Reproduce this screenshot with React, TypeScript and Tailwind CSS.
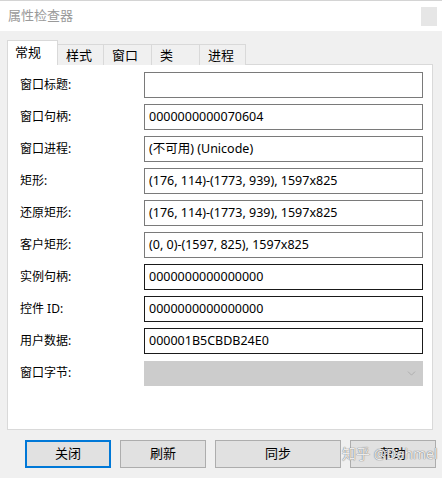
import { ChevronDown } from "lucide-react";

const rows: { label: string; value: string; dark?: boolean }[] = [
  { label: "窗口标题:", value: "" },
  { label: "窗口句柄:", value: "0000000000070604" },
  { label: "窗口进程:", value: "(不可用) (Unicode)" },
  { label: "矩形:", value: "(176, 114)-(1773, 939), 1597x825" },
  { label: "还原矩形:", value: "(176, 114)-(1773, 939), 1597x825" },
  { label: "客户矩形:", value: "(0, 0)-(1597, 825), 1597x825" },
  { label: "实例句柄:", value: "0000000000000000", dark: true },
  { label: "控件 ID:", value: "0000000000000000", dark: true },
  { label: "用户数据:", value: "000001B5CBDB24E0", dark: true },
];

const tabs = ["样式", "窗口", "类", "进程"];
const tabWidths = ["w-[46px]", "w-[48px]", "w-[48px]", "w-[46px]"];

export default function App() {
  return (
    <div className="relative w-[442px] h-[478px] overflow-hidden bg-[#f0f0f0] text-[12px] text-black font-['Noto_Sans','Noto_Sans_CJK_SC',sans-serif]">
      {/* title bar */}
      <div className="flex items-center justify-between h-[31px] bg-white border-t border-[#d4d4d4] pl-[8px] pr-[5px]">
        <span className="text-[13px] text-[#9a9a9a]">属性检查器</span>
        <div className="w-[16px] h-[19px] bg-[#e6e6e6]" />
      </div>

      <div className="pl-[7px] pt-[9px]">
        {/* tabs */}
        <div className="flex items-end h-[25px] -mb-px">
          <div className="relative z-10 w-[51px] h-[25px] bg-white border border-b-0 border-[#d9d9d9] pl-[7px] pt-[2px] text-[13px]">
            常规
          </div>
          {tabs.map((t, i) => (
            <div
              key={t}
              className={`${tabWidths[i]} h-[21px] border-t border-r border-[#d9d9d9] pl-[8px] text-[13px] leading-[20px] bg-[#f0f0f0]`}
            >
              {t}
            </div>
          ))}
        </div>

        {/* panel */}
        <div className="w-[426px] h-[366px] bg-white border border-[#d9d9d9] pt-[7px] pl-[12px] pr-[9px] flex flex-col gap-[6px]">
          {rows.map((r) => (
            <div key={r.label} className="flex items-center h-[26px]">
              <span className="w-[124px]">{r.label}</span>
              <div
                className={`flex-1 h-[26px] border ${r.dark ? "border-[#1a1a1a]" : "border-[#7a7a7a]"} pl-[4px] flex items-center text-[12.5px]`}
              >
                {r.value}
              </div>
            </div>
          ))}
          <div className="flex items-center h-[26px]">
            <span className="w-[124px]">窗口字节:</span>
            <div className="flex-1 h-[25px] bg-[#cccccc] flex items-center justify-end pr-[5px]">
              <ChevronDown size={13} strokeWidth={1.5} className="text-[#a8a8a8]" />
            </div>
          </div>
        </div>
      </div>

      {/* buttons */}
      <div className="flex pl-[25px] pt-[10px] gap-[9px]">
        <button className="w-[86px] h-[28px] bg-[#e1e1e1] border-2 border-[#0078d7] text-[13px]">关闭</button>
        <button className="w-[86px] h-[28px] bg-[#e1e1e1] border border-[#adadad] text-[13px]">刷新</button>
        <button className="w-[126px] h-[28px] bg-[#e1e1e1] border border-[#adadad] text-[13px]">同步</button>
        <button className="w-[86px] h-[28px] bg-[#e1e1e1] border border-[#adadad] text-[13px]">帮助</button>
      </div>

      {/* watermark */}
      <div className="absolute left-[342px] top-[444px] whitespace-nowrap leading-[20px] text-[14px] text-white/85 [text-shadow:0_0_1px_#777,0_0_1px_#777] pointer-events-none">
        知乎 @Dehmel
      </div>
    </div>
  );
}
